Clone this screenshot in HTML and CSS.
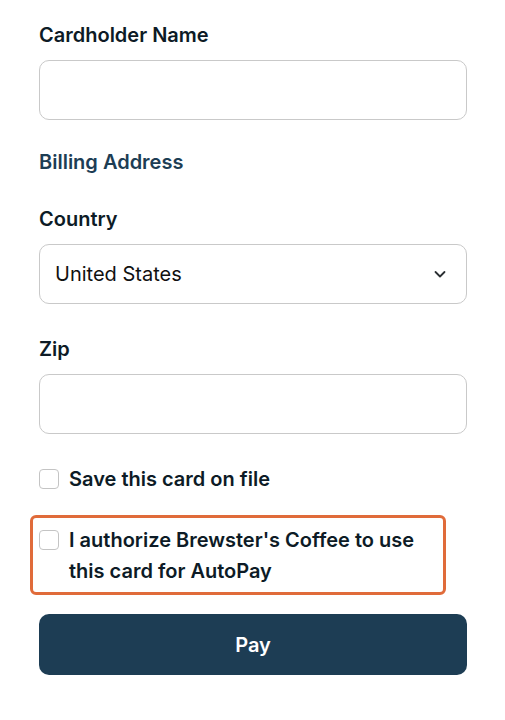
FILE: index.html
```html
<!DOCTYPE html>
<html>
<head>
<meta charset="utf-8">
<link rel="stylesheet" href="styles.css">
</head>
<body>
<form class="form">
  <label class="label">Cardholder Name</label>
  <div class="input"></div>
  <div class="section">Billing Address</div>
  <label class="label">Country</label>
  <div class="input select">
    <span>United States</span>
    <svg class="chev" width="14" height="14" viewBox="0 0 14 14"><path d="M2.5 5 L7 9.5 L11.5 5" fill="none" stroke="#2b2f33" stroke-width="1.8" stroke-linecap="round" stroke-linejoin="round"/></svg>
  </div>
  <label class="label zip">Zip</label>
  <div class="input"></div>
  <div class="check save"><span class="box"></span><span class="ctext">Save this card on file</span></div>
  <div class="auth">
    <div class="check"><span class="box"></span><span class="ctext">I authorize Brewster's Coffee to use this card for AutoPay</span></div>
  </div>
  <div class="pay">Pay</div>
</form>
</body>
</html>
```
FILE: styles.css
```css
* { box-sizing: border-box; }
body { margin: 0; background: #fff; font-family: Inter, "Noto Sans", sans-serif; color: #0d1b26; }
.form { width: 505px; padding: 23px 38px 0 39px; display: flex; flex-direction: column; }
.label { font-size: 20px; font-weight: 600; line-height: 24px; display: block; margin-bottom: 13px; }
.input { height: 60px; border: 1px solid #c9c9c9; border-radius: 10px; width: 428px; }
.section { color: #1d3d54; font-size: 20px; font-weight: 600; line-height: 24px; margin-top: 30px; margin-bottom: 33px; }
.select { display: flex; align-items: center; justify-content: space-between; padding: 0 19px 0 15px; font-size: 20px; color: #111; }
.zip { margin-top: 33px; }
.check { display: flex; align-items: flex-start; gap: 10px; font-size: 20px; font-weight: 600; line-height: 31px; }
.box { width: 20px; height: 20px; border: 1px solid #c4c4c4; border-radius: 4px; flex: none; margin-top: 5px; }
.save { margin-top: 30px; }
.auth { margin-top: 20px; margin-left: -9px; width: 416px; border: 3px solid #e06b3a; border-radius: 6px; padding: 7px 20px 5px 6px; }
.pay { margin-top: 19px; height: 61px; width: 428px; background: #1d3d54; color: #fff; border-radius: 10px; display: flex; align-items: center; justify-content: center; font-size: 20px; font-weight: 600; }
```
